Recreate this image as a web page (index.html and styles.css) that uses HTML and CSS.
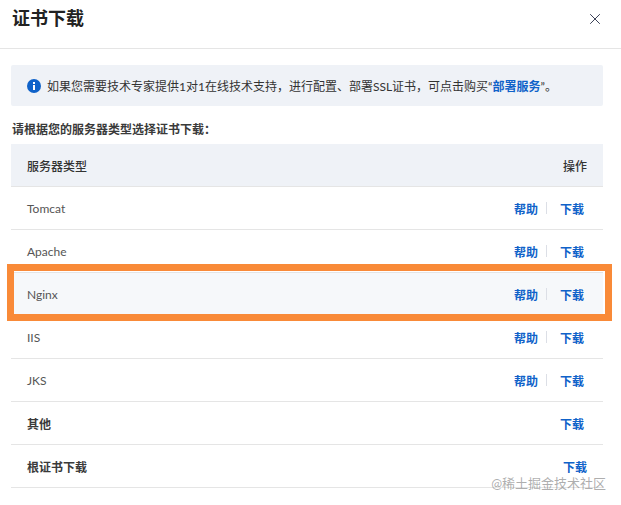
FILE: index.html
```html
<!DOCTYPE html>
<html lang="zh">
<head>
<meta charset="utf-8">
<title>证书下载</title>
<link rel="stylesheet" href="styles.css">
</head>
<body>
<div class="dialog">
  <header class="head">
    <h1 class="title">证书下载</h1>
    <svg class="close" width="10" height="10" viewBox="0 0 10 10"><path d="M.2.2l9.6 9.6M9.8.2L.2 9.8" stroke="#3c4258" stroke-width="1" fill="none"/></svg>
  </header>
  <div class="body">
    <div class="notice">
      <svg class="info" width="14" height="14" viewBox="0 0 14 14"><circle cx="7" cy="7" r="7" fill="#0f62c9"/><rect x="6" y="6" width="2" height="5" fill="#fff"/><rect x="6" y="3" width="2" height="2" fill="#fff"/></svg>
      <span>如果您需要技术专家提供1对1在线技术支持，进行配置、部署SSL证书，可点击购买“<a class="link">部署服务</a>”。</span>
    </div>
    <p class="label">请根据您的服务器类型选择证书下载：</p>
    <div class="table">
      <div class="row thead"><span class="medium">服务器类型</span><span class="medium">操作</span></div>
      <div class="row"><span>Tomcat</span><span class="ops"><a class="link">帮助</a><i class="sep"></i><a class="link">下载</a></span></div>
      <div class="row"><span>Apache</span><span class="ops"><a class="link">帮助</a><i class="sep"></i><a class="link">下载</a></span></div>
      <div class="row hover"><span>Nginx</span><span class="ops"><a class="link">帮助</a><i class="sep"></i><a class="link">下载</a></span></div>
      <div class="row"><span>IIS</span><span class="ops"><a class="link">帮助</a><i class="sep"></i><a class="link">下载</a></span></div>
      <div class="row"><span>JKS</span><span class="ops"><a class="link">帮助</a><i class="sep"></i><a class="link">下载</a></span></div>
      <div class="row"><span class="strong">其他</span><span class="ops"><a class="link">下载</a></span></div>
      <div class="row"><span class="strong">根证书下载</span><span class="ops wide"><a class="link">下载</a></span></div>
    </div>
  </div>
</div>
<div class="highlight"></div>
<div class="watermark">@稀土掘金技术社区</div>
</body>
</html>
```
FILE: styles.css
```css
html, body { margin: 0; padding: 0; background: #fff; }
body {
  width: 621px; height: 505px; overflow: hidden; position: relative;
  font-family: "Lato", "Noto Sans CJK SC", sans-serif;
  font-size: 12px; color: #333;
}
.dialog { width: 621px; }
.head {
  height: 38px; border-bottom: 1px solid #e5e5e5;
  display: flex; justify-content: space-between; align-items: center;
  padding: 0 21px 10px 12px;
}
.title { margin: 0 0 2px; font-size: 18px; font-weight: 700; color: #222; line-height: 24px; }
.close { display: block; }
.body { padding: 16px 18px 0 11px; }
.notice {
  height: 41px; background: #eff2f7; border-radius: 2px;
  display: flex; align-items: center; gap: 6px; padding-left: 16px; color: #333;
}
.info { flex: none; }
.link { color: #0f62c9; font-weight: 700; }
.label { margin: 16px 0 7px 1px; height: 15px; line-height: 15px; font-weight: 700; color: #3a3a3a; }
.row {
  height: 42px; border-bottom: 1px solid #e5e5e5;
  display: flex; justify-content: space-between; align-items: center;
  padding: 0 16px; color: #555;
}
.thead { background: #eff2f7; }
.medium { font-weight: 500; color: #333; }
.strong { font-weight: 700; color: #3a3a3a; }
.hover { background: #f6f8fa; }
.ops { display: flex; align-items: center; margin-right: 3px; }
.ops.wide { margin-right: 0; }
.sep { display: block; width: 1px; height: 12px; background: #dcdfe6; margin: 0 13px 0 8px; }
.highlight {
  position: absolute; left: 7px; top: 264px; width: 591px; height: 43px;
  border: 7px solid #f98a38;
}
.watermark {
  position: absolute; right: 15px; top: 475px; font-size: 13px; line-height: 16px;
  color: rgba(120,120,120,.6);
}
```
